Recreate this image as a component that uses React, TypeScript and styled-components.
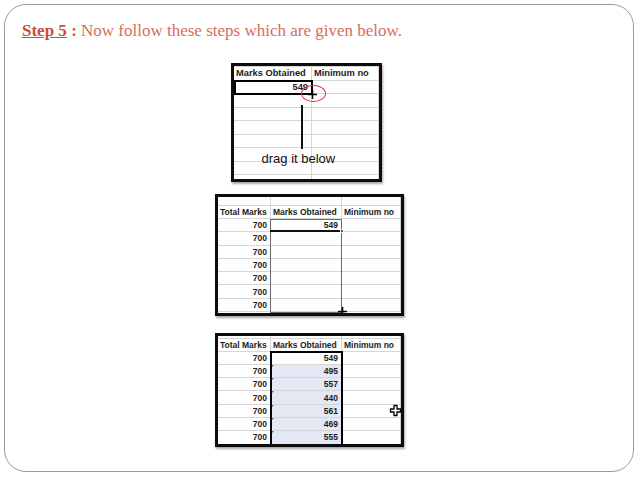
import React from 'react';
import styled, { createGlobalStyle } from 'styled-components';

const Global = createGlobalStyle`
  html, body { margin: 0; padding: 0; background: #fff; }
  body { width: 638px; height: 478px; overflow: hidden; }
`;

const Slide = styled.div`
  width: 638px;
  height: 478px;
  padding: 4px;
  box-sizing: border-box;
`;

const Frame = styled.div`
  width: 630px;
  height: 468px;
  box-sizing: border-box;
  border: 1.5px solid #9c9c9c;
  border-radius: 22px;
  padding: 16px 0 0 17px;
  display: flex;
  flex-direction: column;
`;

const Title = styled.div`
  font-family: "Liberation Serif", "Times New Roman", serif;
  font-size: 17px;
  line-height: 20px;
  color: #d86c5e;
  white-space: nowrap;
`;

const StepLabel = styled.span`
  font-weight: bold;
  text-decoration: underline;
  color: #cf4a39;
`;

const Colon = styled.span`
  font-weight: bold;
  color: #cf4a39;
`;

const Sheet = styled.div<{ $w: number; $h: number; $mt: number; $ml: number }>`
  position: relative;
  flex: none;
  box-sizing: border-box;
  width: ${p => p.$w}px;
  height: ${p => p.$h}px;
  margin: ${p => p.$mt}px 0 0 ${p => p.$ml}px;
  border: 3px solid #0d0d0d;
  background: #fff;
  overflow: hidden;
  box-shadow: 1px 2px 2px rgba(0, 0, 0, 0.35);
`;

const Grid = styled.div<{ $cols: string; $rows: string }>`
  display: grid;
  grid-template-columns: ${p => p.$cols};
  grid-template-rows: ${p => p.$rows};
`;

const Cell = styled.div<{ $align?: 'left' | 'right'; $fill?: string; $size?: number }>`
  position: relative;
  box-sizing: border-box;
  border-right: 1px solid #d6d6d6;
  border-bottom: 1px solid #d6d6d6;
  display: flex;
  align-items: center;
  justify-content: ${p => (p.$align === 'right' ? 'flex-end' : 'flex-start')};
  padding: 0 2.5px;
  font-family: "Liberation Sans", Arial, sans-serif;
  font-weight: bold;
  font-size: ${p => p.$size ?? 8.5}px;
  color: #1c1c1c;
  white-space: nowrap;
  overflow: hidden;
  background: ${p => p.$fill ?? '#fff'};
`;

const Flag = styled.span`
  position: absolute;
  left: 0;
  top: 0;
  width: 0;
  height: 0;
  border-top: 3px solid #2e8b3a;
  border-right: 3px solid transparent;
`;

const Box = styled.div<{ $l: number; $t: number; $w: number; $h: number; $b: string }>`
  position: absolute;
  box-sizing: border-box;
  left: ${p => p.$l}px;
  top: ${p => p.$t}px;
  width: ${p => p.$w}px;
  height: ${p => p.$h}px;
  border: ${p => p.$b};
  pointer-events: none;
`;

const Bar = styled.div<{ $l: number; $t: number; $w: number; $h: number; $c: string }>`
  position: absolute;
  left: ${p => p.$l}px;
  top: ${p => p.$t}px;
  width: ${p => p.$w}px;
  height: ${p => p.$h}px;
  background: ${p => p.$c};
`;

const Ellipse = styled.div`
  position: absolute;
  box-sizing: border-box;
  left: 67px;
  top: 19px;
  width: 25px;
  height: 17px;
  border: 1.5px solid #e0333b;
  border-radius: 50%;
`;

const DragText = styled.div`
  position: absolute;
  left: 28px;
  top: 85px;
  font-family: "Liberation Sans", Arial, sans-serif;
  font-size: 13px;
  line-height: 16px;
  color: #111;
  white-space: nowrap;
`;

const Icon = styled.svg<{ $l: number; $t: number }>`
  position: absolute;
  left: ${p => p.$l}px;
  top: ${p => p.$t}px;
  overflow: visible;
`;

const ThinPlus: React.FC<{ l: number; t: number; s?: number }> = ({ l, t, s = 9 }) => (
  <Icon $l={l} $t={t} width={s} height={s} viewBox="0 0 9 9">
    <path d="M4.5 0 V9 M0 4.5 H9" stroke="#000" strokeWidth="1.6" fill="none" />
  </Icon>
);

const FatCross: React.FC<{ l: number; t: number }> = ({ l, t }) => (
  <Icon $l={l} $t={t} width={11} height={11} viewBox="0 0 11 11">
    <path
      d="M4 0.5 H7 V4 H10.5 V7 H7 V10.5 H4 V7 H0.5 V4 H4 Z"
      fill="#fff"
      stroke="#000"
      strokeWidth="1.3"
      strokeLinejoin="round"
    />
  </Icon>
);

const values = ['549', '495', '557', '440', '561', '469', '555'];

const SheetOne: React.FC = () => (
  <Sheet $w={151} $h={119} $mt={21.5} $ml={208.5}>
    <Grid $cols="78px 67px" $rows="1.5px 13.5px repeat(8, 13.5px)">
      <Cell $size={9.3} />
      <Cell $size={9.3} />
      <Cell $size={9.3}>Marks Obtained</Cell>
      <Cell $size={9.3}>Minimum no</Cell>
      <Cell $size={9.3} $align="right">549</Cell>
      <Cell $size={9.3} />
      {Array.from({ length: 7 }).map((_, i) => (
        <React.Fragment key={i}>
          <Cell />
          <Cell />
        </React.Fragment>
      ))}
    </Grid>
    <Box $l={0} $t={14} $w={79.5} $h={15} $b="2.5px solid #000" />
    <Ellipse />
    <ThinPlus l={74.5} t={24.5} />
    <Bar $l={67} $t={39} $w={2} $h={44} $c="#111" />
    <DragText>drag it below</DragText>
  </Sheet>
);

const SheetTwo: React.FC = () => (
  <Sheet $w={189} $h={122} $mt={12} $ml={192.5}>
    <Grid $cols="53px 71px 59px" $rows="9.5px 13px repeat(7, 13.3px)">
      <Cell />
      <Cell />
      <Cell />
      <Cell>Total Marks</Cell>
      <Cell>Marks Obtained</Cell>
      <Cell>Minimum no</Cell>
      {Array.from({ length: 7 }).map((_, i) => (
        <React.Fragment key={i}>
          <Cell $align="right">700</Cell>
          <Cell $align="right">{i === 0 ? '549' : ''}</Cell>
          <Cell />
        </React.Fragment>
      ))}
    </Grid>
    <Box $l={52.5} $t={22} $w={72} $h={94} $b="1.5px solid #6a6a6a" />
    <Bar $l={52.5} $t={33} $w={72} $h={2} $c="#111" />
    <Box $l={122.5} $t={32} $w={4} $h={4} $b="1px solid #fff" style={{ background: '#555' }} />
    <ThinPlus l={120} t={110} />
  </Sheet>
);

const SheetThree: React.FC = () => (
  <Sheet $w={189} $h={114} $mt={17} $ml={192.5}>
    <Grid $cols="53px 71px 59px" $rows="3px 13px repeat(7, 13.3px)">
      <Cell />
      <Cell />
      <Cell />
      <Cell>Total Marks</Cell>
      <Cell>Marks Obtained</Cell>
      <Cell>Minimum no</Cell>
      {values.map((v, i) => (
        <React.Fragment key={v + i}>
          <Cell $align="right">700</Cell>
          <Cell $align="right" $fill={i === 0 ? '#fff' : '#e4e7f4'}>
            {i > 0 && <Flag />}
            {v}
          </Cell>
          <Cell />
        </React.Fragment>
      ))}
    </Grid>
    <Box $l={52} $t={15} $w={73} $h={95} $b="2px solid #000" />
    <FatCross l={172.5} t={69.5} />
  </Sheet>
);

export default function App() {
  return (
    <>
      <Global />
      <Slide>
        <Frame>
          <Title>
            <StepLabel>Step 5</StepLabel> <Colon>:</Colon> Now follow these steps which are given below.
          </Title>
          <SheetOne />
          <SheetTwo />
          <SheetThree />
        </Frame>
      </Slide>
    </>
  );
}
